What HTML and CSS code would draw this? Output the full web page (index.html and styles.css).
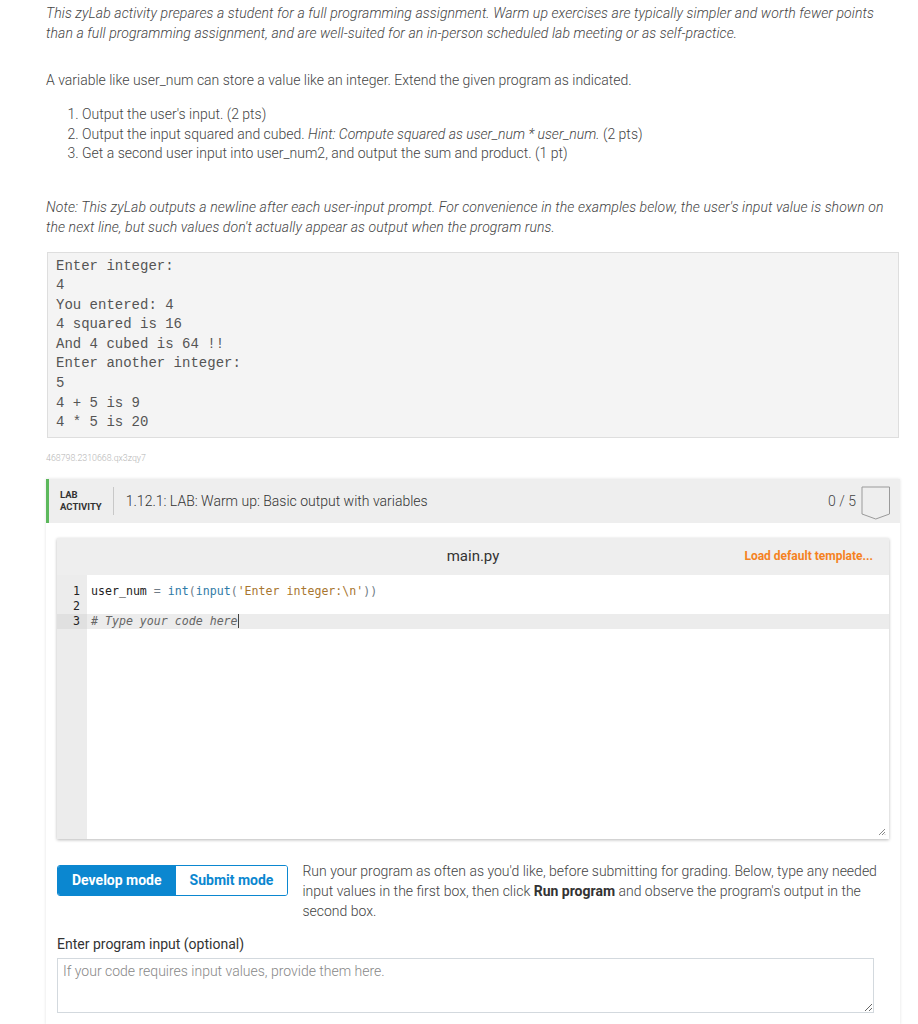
FILE: index.html
```html
<!DOCTYPE html>
<html>
<head>
<meta charset="utf-8">
<link rel="stylesheet" href="styles.css">
</head>
<body>
<div class="page">
  <p class="intro">This zyLab activity prepares a student for a full programming assignment. Warm up exercises are typically simpler and worth fewer points than a full programming assignment, and are well-suited for an in-person scheduled lab meeting or as self-practice.</p>
  <p class="para">A variable like user_num can store a value like an integer. Extend the given program as indicated.</p>
  <ol class="steps">
    <li>Output the user's input. (2 pts)</li>
    <li>Output the input squared and cubed. <em>Hint: Compute squared as user_num * user_num.</em> (2 pts)</li>
    <li>Get a second user input into user_num2, and output the sum and product. (1 pt)</li>
  </ol>
  <p class="note">Note: This zyLab outputs a newline after each user-input prompt. For convenience in the examples below, the user's input value is shown on the next line, but such values don't actually appear as output when the program runs.</p>
  <pre class="sample">Enter integer:
4
You entered: 4
4 squared is 16
And 4 cubed is 64 !!
Enter another integer:
5
4 + 5 is 9
4 * 5 is 20</pre>
  <div class="ident">468798.2310668.qx3zqy7</div>

  <div class="lab">
    <div class="lab-head">
      <div class="lab-tag">LAB<br>ACTIVITY</div>
      <div class="lab-div"></div>
      <div class="lab-title">1.12.1: LAB: Warm up: Basic output with variables</div>
      <div class="lab-score">0 / 5</div>
      <svg class="badge" width="30" height="34" viewBox="0 0 30 34"><path d="M1 1 H28.5 V28 L14.75 33 L1 28 Z" fill="none" stroke="#9a9a9a" stroke-width="1"/></svg>
    </div>
    <div class="lab-body">
      <div class="editor">
        <div class="ed-head">
          <span></span>
          <span class="ed-file">main.py</span>
          <span class="ed-load">Load default template...</span>
        </div>
        <div class="ed-body">
          <div class="gutter">
            <div class="ln">1</div>
            <div class="ln">2</div>
            <div class="ln active">3</div>
          </div>
          <div class="code">
            <div class="cl"><span class="v">user_num</span> <span class="o">=</span> <span class="b">int</span><span class="o">(</span><span class="b">input</span><span class="o">(</span><span class="s">'Enter integer:\n'</span><span class="o">))</span></div>
            <div class="cl"> </div>
            <div class="cl active"><span class="c"># Type your code here</span><span class="cursor"></span></div>
          </div>
          <svg class="grip" width="8" height="8" viewBox="0 0 8 8"><path d="M7 1 L1 7 M7 4 L4 7 M7 6.5 L6.5 7" stroke="#888" stroke-width="1"/></svg>
        </div>
      </div>

      <div class="run-row">
        <div class="modes">
          <span class="mode on">Develop mode</span>
          <span class="mode">Submit mode</span>
        </div>
        <p class="run-desc">Run your program as often as you'd like, before submitting for grading. Below, type any needed input values in the first box, then click <b class="strong">Run program</b> and observe the program's output in the second box.</p>
      </div>

      <div class="in-label">Enter program input (optional)</div>
      <textarea class="in-box" placeholder="If your code requires input values, provide them here."></textarea>
    </div>
  </div>
</div>
</body>
</html>
```

FILE: styles.css
```css
html, body {
  margin: 0;
  padding: 0;
  background: #fff;
}
body {
  font-family: Roboto, "Liberation Sans", Arial, sans-serif;
  font-size: 14px;
  line-height: 20px;
  font-weight: 300;
  color: #444;
}
.page {
  width: 853px;
  padding: 3px 0 0 46px;
}
p { margin: 0; }
.intro, .note {
  font-style: italic;
  letter-spacing: 0.09px;
  width: 840px;
}
.para { margin-top: 27px; }
.steps {
  margin: 15px 0 0 0;
  padding-left: 36px;
  line-height: 19.5px;
}
.note {
  margin-top: 33px;
}
.sample {
  margin: 15px 0 0 1px;
  padding: 4px 8px 4px;
  background: #f4f4f4;
  border: 1px solid #dedede;
  font-family: "Liberation Mono", "Courier New", monospace;
  font-size: 14px;
  line-height: 19.6px;
  color: #555;
}
.ident {
  margin-top: 15px;
  font-size: 8.8px;
  line-height: 10px;
  color: #b5b5b5;
}
.lab {
  margin-top: 16px;
  width: 854px;
  box-shadow: 0 0 3px rgba(0,0,0,0.12);
}
.lab-head {
  display: flex;
  align-items: center;
  height: 44px;
  background: #eeeeee;
  border-left: 3px solid #5cb85c;
  padding: 0 9px 0 11px;
}
.lab-tag {
  font-size: 9.5px;
  line-height: 12px;
  font-weight: 700;
  color: #333;
}
.lab-div {
  width: 1px;
  height: 28px;
  background: #c8c8c8;
  margin: 0 12px 0 11px;
}
.lab-title {
  flex: 1;
  color: #333;
  font-size: 14px;
}
.lab-score {
  color: #444;
  margin-right: 5px;
}
.badge {
  display: block;
  margin-top: 4px;
}
.lab-body {
  padding: 15px 11px 12px;
}
.editor {
  box-shadow: 0 1px 3px rgba(0,0,0,0.28);
}
.ed-head {
  display: grid;
  grid-template-columns: 1fr auto 1fr;
  align-items: center;
  height: 37px;
  background: #eeeeee;
}
.ed-file {
  font-size: 15px;
  font-weight: 400;
  color: #333;
}
.ed-load {
  justify-self: end;
  padding-right: 16px;
  font-size: 12px;
  font-weight: 700;
  color: #f5821f;
}
.ed-body {
  position: relative;
  display: flex;
  height: 264px;
  background: #fff;
}
.gutter {
  width: 30px;
  background: #ececec;
  padding-top: 9px;
  box-sizing: border-box;
}
.ln, .cl {
  height: 15px;
  line-height: 15px;
  font-family: "DejaVu Sans Mono", "Liberation Mono", monospace;
  font-size: 11.6px;
  font-weight: 400;
}
.ln {
  text-align: right;
  padding-right: 7px;
  color: #222;
}
.ln.active { background: #e0e0e0; }
.code {
  flex: 1;
  padding-top: 9px;
}
.cl {
  padding-left: 4px;
  white-space: pre;
  color: #222;
}
.cl.active { background: #ececec; }
.v { color: #222; }
.o { color: #6f7c87; }
.b { color: #2f7aa6; }
.s { color: #a8762f; }
.c { color: #666; font-style: italic; }
.cursor {
  display: inline-block;
  width: 1px;
  height: 14px;
  background: #444;
  vertical-align: -3px;
}
.grip {
  position: absolute;
  right: 3px;
  bottom: 3px;
}
.run-row {
  display: flex;
  align-items: flex-start;
  margin-top: 22px;
}
.modes {
  display: flex;
  margin-top: 4px;
  border: 1px solid #0b87d0;
  border-radius: 3px;
  overflow: hidden;
  flex: none;
}
.mode {
  display: block;
  height: 29px;
  line-height: 29px;
  padding: 0 14px;
  font-weight: 700;
  font-size: 14px;
  color: #0b87d0;
  background: #fff;
}
.mode.on {
  background: #0b87d0;
  color: #fff;
}
.run-desc {
  margin-left: 14px;
  color: #444;
}
.strong { font-weight: 700; color: #333; }
.in-label {
  margin-top: 13px;
  font-weight: 400;
  color: #333;
}
.in-box {
  display: block;
  margin-top: 4px;
  width: 817px;
  height: 55px;
  box-sizing: border-box;
  border: 1px solid #d3d9de;
  padding: 2px 5px;
  font-family: Roboto, "Liberation Sans", Arial, sans-serif;
  font-size: 14px;
  font-weight: 300;
  line-height: 20px;
  color: #333;
}
.in-box::placeholder { color: #888; }
```
